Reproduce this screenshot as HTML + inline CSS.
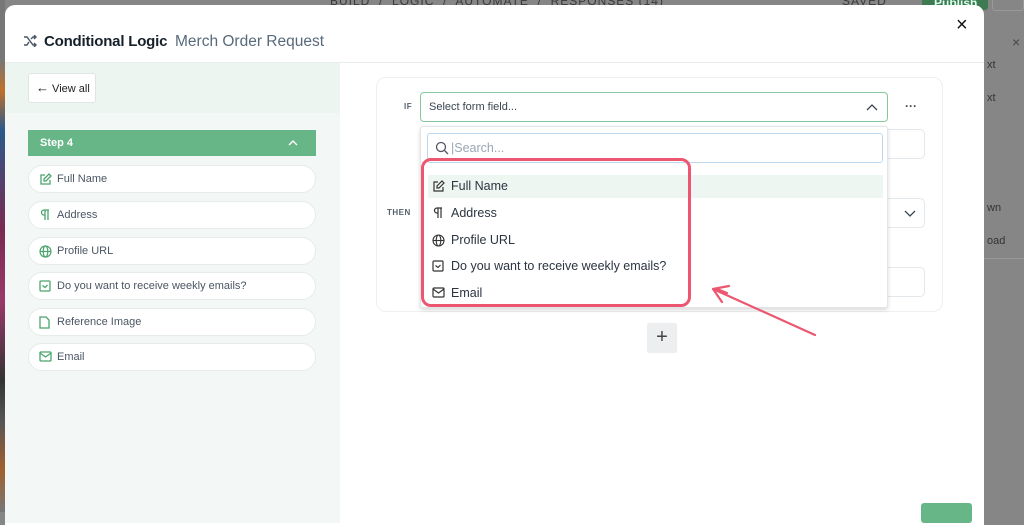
<!DOCTYPE html>
<html><head><style>
*{box-sizing:border-box;margin:0;padding:0}
body{width:1024px;height:512px;overflow:hidden;position:relative;background:#868686;font-family:"Liberation Sans",sans-serif;}
.abs{position:absolute}
.edge{left:0;top:0;width:5px;height:512px;background:linear-gradient(#777 0,#777 60px,#c0702a 90px,#2c5a8a 130px,#7a2a50 230px,#9a3a6a 300px,#333 380px,#555 420px,#a06030 470px,#777 512px)}
.topnav{top:-6px;font-size:12px;color:#3a3a3a;letter-spacing:1px}
.modal{left:5px;top:5px;width:979px;height:520px;background:#fff;border-radius:10px 10px 0 0;overflow:hidden}
.hdr{left:0;top:0;width:979px;height:58px;border-bottom:1px solid #e8ecea}
.side{left:0;top:58px;width:335px;height:460px;background:#f3f7f5}
.sidetop{left:0;top:58px;width:335px;height:50px;background:#edf5f0}
.pill{position:absolute;left:23px;width:288px;height:28px;background:#fff;border:1px solid #e6ece9;border-radius:14px;font-size:11px;color:#4a5663;line-height:26px;padding-left:28px}
.pill svg{position:absolute;left:10px;top:7px}
.item{position:absolute;left:7px;width:455px;height:23px;font-size:12.5px;color:#2b3440;line-height:23px;padding-left:23px}
.item svg{position:absolute;left:4px;top:5px}
.ghost{position:absolute;left:882px;width:38px;height:30px;border:1px solid #e3e8ec;border-left:none;border-radius:0 5px 5px 0;background:#fff}
</style></head><body>
<div class="abs edge"></div>
<div class="abs topnav" style="left:330px">BUILD &nbsp;/&nbsp; LOGIC &nbsp;/&nbsp; AUTOMATE &nbsp;/&nbsp; RESPONSES (14)</div>
<div class="abs topnav" style="left:842px">SAVED</div>
<div class="abs" style="left:922px;top:-4px;width:66px;height:14px;background:#3e7a52;border-radius:3px;color:#dfe;font-size:12px;font-weight:bold;padding-left:12px">Publish</div>
<div class="abs" style="left:992px;top:-4px;width:32px;height:15px;border:1px solid #999;border-radius:3px"></div>
<div class="abs" style="left:1012px;top:34px;color:#444;font-size:14px">×</div>
<div class="abs" style="left:987px;top:60px;color:#333;font-size:11px;line-height:11px">xt<br><br><br>xt<br><br><br><br><br><br><br><br><br><br>wn<br><br><br>oad</div>
<div class="abs" style="left:984px;top:258px;width:40px;height:1px;background:#999"></div>

<div class="abs modal">
 <div class="abs hdr">
  <svg class="abs" style="left:18px;top:30px" width="14" height="12" viewBox="0 0 14 12" fill="none" stroke="#4a5663" stroke-width="1.4"><path d="M1 2h3l6 8h3M1 10h3l2-3M8 4l2-2h3M11 0l2 2-2 2M11 8l2 2-2 2"/></svg>
  <div class="abs" style="left:39px;top:28px;font-size:15px;font-weight:bold;color:#16202a;letter-spacing:-0.2px">Conditional Logic</div>
  <div class="abs" style="left:170px;top:28px;font-size:15.5px;color:#586a7a">Merch Order Request</div>
  <div class="abs" style="left:951px;top:9px;font-size:20px;color:#111">×</div>
 </div>
 <div class="abs side"></div>
 <div class="abs sidetop"></div>
 <div class="abs" style="left:23px;top:68px;width:68px;height:30px;background:#fff;border:1px solid #dfe5e2;border-radius:3px;font-size:11px;color:#222;line-height:28px;padding-left:7px"><span style="font-size:13px">←</span> View all</div>
 <div class="abs" style="left:23px;top:125px;width:288px;height:26px;background:#67b688;color:#fff;font-size:11px;font-weight:bold;line-height:26px;padding-left:12px">Step 4<svg style="position:absolute;right:18px;top:10px" width="10" height="6" viewBox="0 0 10 6" fill="none" stroke="#fff" stroke-width="1.4"><path d="M1 5l4-4 4 4"/></svg></div>
 <div class="pill" style="top:160px"><svg width="13" height="13" viewBox="0 0 13 13" fill="none" stroke="#4aa56e" stroke-width="1.3"><path d="M6 2H2v9h9V7M10 1l2 2-5 5H5V6z"/></svg>Full Name</div>
 <div class="pill" style="top:196px"><svg width="12" height="12" viewBox="0 0 12 12" fill="none" stroke="#4aa56e" stroke-width="1.3"><path d="M6 1v10M9 1v10M10 1H5a2.5 2.5 0 0 0 0 5h1"/></svg>Address</div>
 <div class="pill" style="top:232px"><svg width="13" height="13" viewBox="0 0 13 13" fill="none" stroke="#4aa56e" stroke-width="1.2"><circle cx="6.5" cy="6.5" r="5.5"/><ellipse cx="6.5" cy="6.5" rx="2.3" ry="5.5"/><path d="M1 6.5h11"/></svg>Profile URL</div>
 <div class="pill" style="top:267px"><svg width="12" height="12" viewBox="0 0 12 12" fill="none" stroke="#4aa56e" stroke-width="1.3"><rect x="1" y="1" width="10" height="10" rx="1"/><path d="M3.5 5.5l2.5 2 2.5-2.5"/></svg>Do you want to receive weekly emails?</div>
 <div class="pill" style="top:303px"><svg width="11" height="13" viewBox="0 0 11 13" fill="none" stroke="#4aa56e" stroke-width="1.3"><path d="M1 1h6l3 3v8H1z"/></svg>Reference Image</div>
 <div class="pill" style="top:338px"><svg width="13" height="11" viewBox="0 0 13 11" fill="none" stroke="#4aa56e" stroke-width="1.3"><rect x="1" y="1" width="11" height="9" rx="1"/><path d="M1 2l5.5 4L12 2"/></svg>Email</div>

 <div class="abs" style="left:371px;top:72px;width:567px;height:235px;border:1px solid #edf0ef;border-radius:10px"></div>
 <div class="abs" style="left:399px;top:97px;font-size:8px;font-weight:bold;color:#55606b;letter-spacing:.5px">IF</div>
 <div class="abs" style="left:382px;top:203px;font-size:8px;font-weight:bold;color:#55606b;letter-spacing:.5px">THEN</div>
 <div class="ghost" style="top:124px"></div>
 <div class="ghost" style="top:193px"><svg style="position:absolute;left:17px;top:11px" width="12" height="7" viewBox="0 0 12 7" fill="none" stroke="#3a4550" stroke-width="1.3"><path d="M1 1l5 5 5-5"/></svg></div>
 <div class="ghost" style="top:262px"></div>
 <div class="abs" style="left:415px;top:87px;width:468px;height:30px;border:1px solid #86c89e;border-radius:4px;font-size:11px;color:#3a4550;line-height:28px;padding-left:8px">Select form field...<svg style="position:absolute;right:9px;top:10px" width="12" height="8" viewBox="0 0 12 8" fill="none" stroke="#3a4550" stroke-width="1.3"><path d="M1 7l5-5 5 5"/></svg></div>
 <div class="abs" style="left:900px;top:94px;font-size:12px;color:#445;font-weight:bold">···</div>
 <div class="abs" style="left:415px;top:121px;width:468px;height:182px;background:#fff;border:1px solid #e3e6e8;border-radius:3px;box-shadow:0 2px 4px rgba(0,0,0,.15)">
  <div class="abs" style="left:6px;top:6px;width:456px;height:30px;border:1px solid #bcd8ef;border-radius:3px;font-size:12.5px;color:#9aa7b4;line-height:28px;padding-left:23px"><svg style="position:absolute;left:7px;top:7px" width="14" height="14" viewBox="0 0 14 14" fill="none" stroke="#556" stroke-width="1.3"><circle cx="6" cy="6" r="4.5"/><path d="M9.5 9.5l3.5 3.5"/></svg>|Search...</div>
  <div class="item" style="top:48px;background:#eef6f1"><svg width="13" height="13" viewBox="0 0 13 13" fill="none" stroke="#333" stroke-width="1.2"><path d="M6 2H2v9h9V7M10 1l2 2-5 5H5V6z"/></svg>Full Name</div>
  <div class="item" style="top:75px"><svg width="12" height="12" viewBox="0 0 12 12" fill="none" stroke="#333" stroke-width="1.2"><path d="M6 1v10M9 1v10M10 1H5a2.5 2.5 0 0 0 0 5h1"/></svg>Address</div>
  <div class="item" style="top:102px"><svg width="13" height="13" viewBox="0 0 13 13" fill="none" stroke="#333" stroke-width="1.1"><circle cx="6.5" cy="6.5" r="5.5"/><ellipse cx="6.5" cy="6.5" rx="2.3" ry="5.5"/><path d="M1 6.5h11"/></svg>Profile URL</div>
  <div class="item" style="top:128px"><svg width="12" height="12" viewBox="0 0 12 12" fill="none" stroke="#333" stroke-width="1.2"><rect x="1" y="1" width="10" height="10" rx="1"/><path d="M3.5 5.5l2.5 2 2.5-2.5"/></svg>Do you want to receive weekly emails?</div>
  <div class="item" style="top:155px"><svg width="13" height="11" viewBox="0 0 13 11" fill="none" stroke="#333" stroke-width="1.2"><rect x="1" y="1" width="11" height="9" rx="1"/><path d="M1 2l5.5 4L12 2"/></svg>Email</div>
 </div>
 <div class="abs" style="left:416px;top:153px;width:270px;height:149px;border:3px solid #ec5670;border-radius:10px"></div>
 <svg class="abs" style="left:700px;top:270px" width="120" height="70" viewBox="0 0 120 70" fill="none" stroke="#ec5670" stroke-width="2.2" stroke-linecap="round"><path d="M8 14L110 60M8 14l16 -3M8 14l9 13M12 14l10 4"/></svg>
 <div class="abs" style="left:642px;top:318px;width:30px;height:30px;background:#eceeef;border-radius:2px;font-size:20px;color:#444;text-align:center;line-height:28px">+</div>
 <div class="abs" style="left:916px;top:498px;width:51px;height:20px;background:#67b688;border-radius:3px"></div>
</div>
</body></html>
